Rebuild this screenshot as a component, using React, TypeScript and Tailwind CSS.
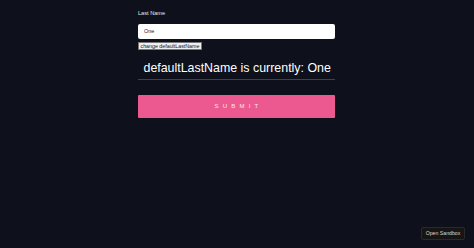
import React from "react";

export default function App() {
  return (
    <div className="relative w-[474px] h-[248px] bg-[#0e101c] overflow-hidden" style={{ fontFamily: '"Liberation Sans", Arial, sans-serif' }}>
      <div className="ml-[138px] w-[197px] pt-[9px] flex flex-col">
        <label className="text-[5.6px] leading-[8px] text-[#e6e6ea]">Last Name</label>
        <div className="mt-[7px] h-[15px] w-full bg-white rounded-[2px] flex items-center pl-[6px]">
          <span className="text-[5.5px] text-[#222]">One</span>
        </div>
        <div className="mt-[3px] flex">
          <button className="h-[8px] px-[1.5px] bg-[#f0f0f0] border border-[#767676] text-[5.3px] leading-[6px] text-[#111] flex items-center">change defaultLastName</button>
        </div>
        <div className="mt-[10px] pl-[5.5px] text-[12.4px] leading-[16px] text-white font-light">defaultLastName is currently: One</div>
        <div className="mt-[3px] h-px w-full bg-[#463c63]" />
        <button className="mt-[15px] h-[23px] w-full bg-[#ec5990] rounded-[1px] flex items-center justify-center text-[6px] tracking-[4.2px] text-[#fbe4ee] pl-[4px]">SUBMIT</button>
      </div>
      <div className="absolute left-[421px] top-[227px] w-[44px] h-[13px] bg-[#151515] border border-[#2a2a2a] rounded-[2px] flex items-center justify-center text-[5.2px] text-[#d8d8d8]">Open Sandbox</div>
    </div>
  );
}
